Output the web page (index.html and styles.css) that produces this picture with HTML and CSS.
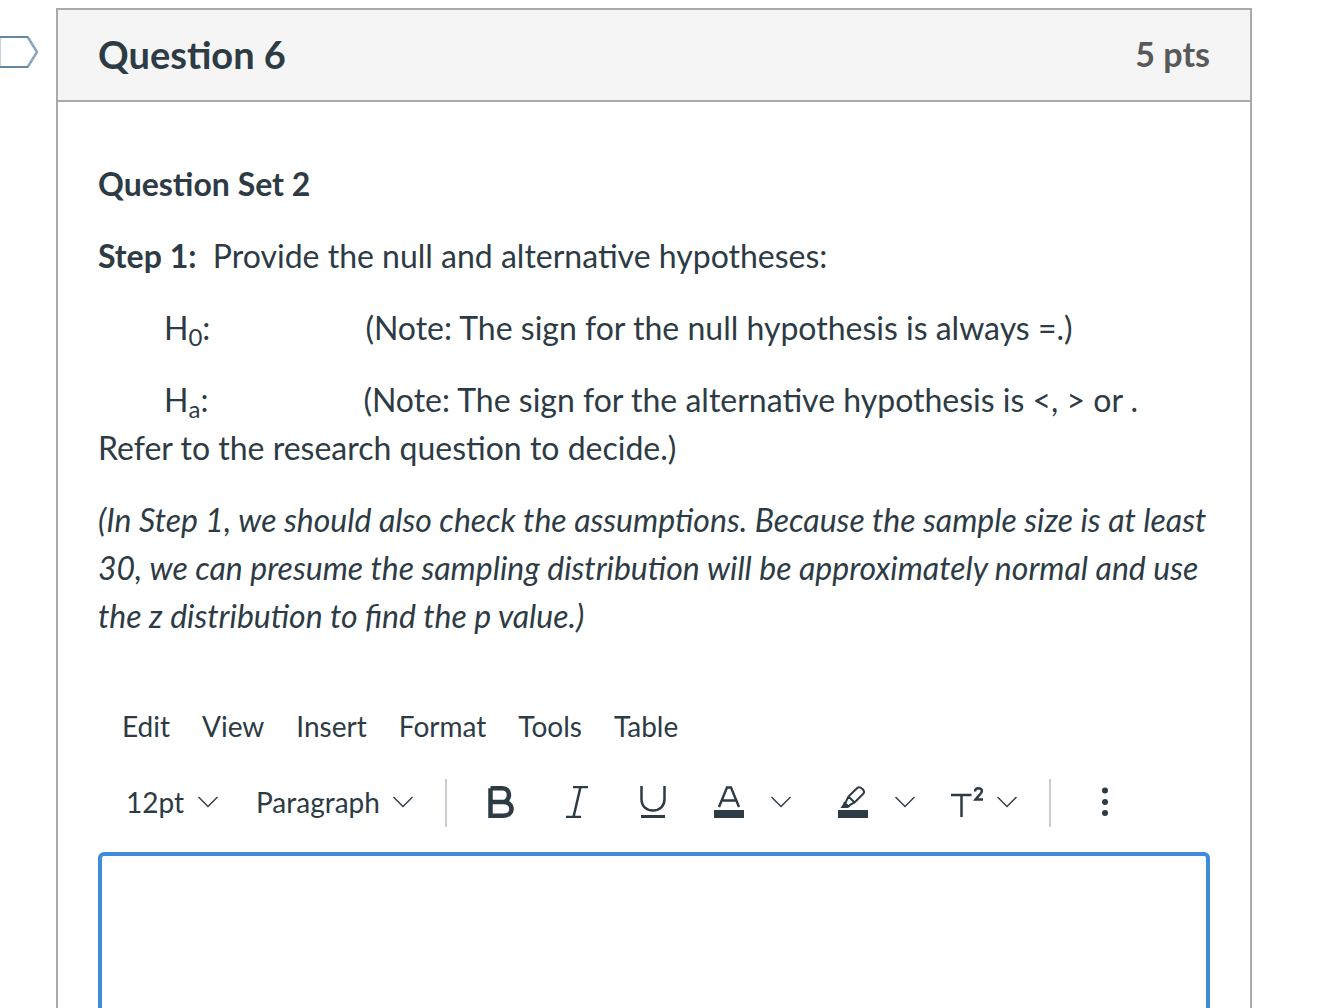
FILE: index.html
```html
<!DOCTYPE html>
<html lang="en">
<head>
    <meta charset="UTF-8">
    <meta name="viewport" content="width=device-width, initial-scale=1.0">
    <title>Question 6</title>
    <link rel="stylesheet" href="styles.css">
</head>
<body>

    <main class="quiz">
        <button type="button" class="flag" aria-label="Flag question">
            <svg width="38" height="32" viewBox="0 0 38 32" fill="none">
                <path d="M0.500 2V30" stroke="#c5d1db"/>
                <path d="M28 1.500L37 16L28 30.500" stroke="#8ba5b9" stroke-width="2.500"/>
                <path d="M0 1H28.500M0 31H28.500" stroke="#6586a0" stroke-width="2"/>
            </svg>
        </button>

        <section class="question">
            <header class="question-header">
                <h1>Question 6</h1>
                <span class="points">5 pts</span>
            </header>

            <div class="question-body">
                <div class="question-text">
                    <p><strong>Question Set 2</strong></p>
                    <p><strong>Step 1:</strong>&nbsp; Provide the null and alternative hypotheses:</p>
                    <p><span class="term">H<sub>0</sub>:</span>(Note: The sign for the null hypothesis is always =.)</p>
                    <p><span class="term">H<sub>a</sub>:</span>(Note: The sign for the alternative hypothesis is &lt;, &gt; or . Refer to the research question to decide.)</p>
                    <p><em>(In Step 1, we should also check the assumptions. Because the sample size is at least 30, we can presume the sampling distribution will be approximately normal and use the z distribution to find the p value.)</em></p>
                </div>

                <div class="menubar">
                    <button type="button">Edit</button>
                    <button type="button">View</button>
                    <button type="button">Insert</button>
                    <button type="button">Format</button>
                    <button type="button">Tools</button>
                    <button type="button">Table</button>
                </div>

                <div class="toolbar">
                    <div class="group group-select">
                        <label class="picker">
                            <select aria-label="Font size">
                                <option>12pt</option>
                                <option>14pt</option>
                                <option>18pt</option>
                            </select>
                            <svg class="chevron" viewBox="0 0 20 12"><path d="M0.500 1L10 10.500L19.500 1"/></svg>
                        </label>
                        <label class="picker">
                            <select aria-label="Block style">
                                <option>Paragraph</option>
                            </select>
                            <svg class="chevron" viewBox="0 0 20 12"><path d="M0.500 1L10 10.500L19.500 1"/></svg>
                        </label>
                    </div>

                    <div class="group group-format">
                        <button type="button" class="tool" aria-label="Bold">
                            <svg class="icon" viewBox="0 0 32 32"><path d="M5.500 2.250H17.500C21.500 2.250 24 5 24 9C24 12.500 21.500 16 18 16H5.500M5.500 16H18C23 16 26.500 18.500 26.500 23C26.500 27 23 29.750 18 29.750H5.500V2.250" stroke-width="4.500"/></svg>
                        </button>
                        <button type="button" class="tool" aria-label="Italic">
                            <svg class="icon" viewBox="0 0 32 32"><path d="M12 1H27M5 31H20M19.500 1L12.500 31" stroke-width="2.500"/></svg>
                        </button>
                        <button type="button" class="tool" aria-label="Underline">
                            <svg class="icon" viewBox="0 0 32 32"><path d="M4.500 0V13C4.500 20 9 24.500 16 24.500C23 24.500 27.500 20 27.500 13V0" stroke-width="2.500"/><path d="M4 30.500H28" stroke-width="3"/></svg>
                        </button>
                        <button type="button" class="tool" aria-label="Text color">
                            <svg class="icon" viewBox="0 0 32 32"><path d="M6 21L14 1.500H18L26 21M9 14.500H23" stroke-width="2.400"/><path d="M1 28H31" stroke-width="8"/></svg>
                        </button>
                        <button type="button" class="more" aria-label="Text color options">
                            <svg class="chevron" viewBox="0 0 20 12"><path d="M0.500 1L10 10.500L19.500 1"/></svg>
                        </button>
                        <button type="button" class="tool" aria-label="Background color">
                            <svg class="icon" viewBox="0 0 32 32"><path d="M11.500 10.500L20.500 1.800Q22.500 0.500 25.500 3Q28 5.500 26.500 7.500L17.500 16.500M11.500 10.500L9.500 14.500Q9.500 16 7.500 17L11.500 20.500C13 18.500 14 18 17.500 16.500M11.500 10.500L17.500 16.500" stroke-width="2" stroke-linejoin="round"/><path class="solid" d="M7.500 16L12.500 20.500L10.500 22H3.500Z"/></svg>
                        </button>
                        <button type="button" class="more" aria-label="Background color options">
                            <svg class="chevron" viewBox="0 0 20 12"><path d="M0.500 1L10 10.500L19.500 1"/></svg>
                        </button>
                        <button type="button" class="script" aria-label="Superscript and subscript">
                            <svg class="icon" viewBox="0 0 32 32"><path d="M0 9H20.500" stroke-width="2.500"/><path d="M10.500 9V31" stroke-width="2.500"/><path d="M24 5.500C24 3.500 25.500 2.200 27.500 2.200C29.500 2.200 31 3.500 31 5C31 7 28 9 24.500 13.500H32" stroke-width="2.400"/></svg>
                            <svg class="chevron" viewBox="0 0 20 12"><path d="M0.500 1L10 10.500L19.500 1"/></svg>
                        </button>
                    </div>

                    <button type="button" class="overflow" aria-label="More">
                        <svg class="icon" viewBox="0 0 32 32"><g class="solid"><circle cx="16" cy="4.500" r="3"/><circle cx="16" cy="16" r="3"/><circle cx="16" cy="27" r="3"/></g></svg>
                    </button>
                </div>

                <textarea class="editor" aria-label="Answer"></textarea>
            </div>
        </section>
    </main>

</body>
</html>
```

FILE: styles.css
```css
body {
    margin: 0;
    font-family: Lato, "Liberation Sans", sans-serif;
    font-size: 32px;
    line-height: 48px;
    color: #2d3b45;
    background-color: #fff;
}
button, select {
    margin: 0;
    padding: 0;
    border: none;
    background: none;
    font: inherit;
    font-size: 28px;
    color: inherit;
    cursor: pointer;
}
.quiz {
    display: flex;
    align-items: flex-start;
    gap: 18px;
    padding: 8px 78px 40px 0;
}
.flag {
    display: flex;
    margin-top: 28px;
}
.question {
    flex: 1;
    min-width: 0;
    border: 2px solid #aaa;
}
.question-header {
    display: flex;
    justify-content: space-between;
    align-items: center;
    padding: 20px 40px 22px;
    border-bottom: 2px solid #aaa;
    background-color: #f5f5f5;
}
.question-header h1 {
    margin: 0;
    font-size: 38px;
    font-weight: bold;
}
.points {
    font-size: 34px;
    font-weight: bold;
    color: #595959;
}
.question-body {
    padding: 34px 40px 40px;
}
.question-text p {
    margin: 24px 0;
}
.question-text sub {
    font-size: 24px;
    line-height: 0;
    position: relative;
    bottom: -6px;
    vertical-align: baseline;
}
.term {
    margin-left: 66px;
    margin-right: 155px;
}
.menubar {
    display: flex;
    gap: 32px;
    padding: 0 24px;
    margin-top: 62px;
}
.toolbar {
    display: flex;
    align-items: center;
    margin: 29px 0 25px;
}
.group {
    box-sizing: border-box;
    display: flex;
    align-items: center;
    height: 48px;
    border-right: 2px solid #c7cdd1;
}
.group-select {
    gap: 38px;
    padding: 0 32px 2px 28px;
}
.group-format {
    padding: 0 32px 2px 16px;
}
.picker {
    display: flex;
    align-items: center;
    gap: 13px;
}
.picker select {
    appearance: none;
}
.tool {
    display: flex;
    justify-content: center;
    width: 76px;
}
.tool[aria-label="Background color"] .icon {
    background: linear-gradient(#2d3b45, #2d3b45) center bottom / 30px 8px no-repeat;
}
.more {
    display: flex;
    width: 48px;
    padding-left: 4px;
}
.script {
    display: flex;
    align-items: center;
    gap: 14px;
    margin-left: 12px;
}
.overflow {
    display: flex;
    padding: 0 38px 2px;
}
.icon {
    width: 32px;
    height: 32px;
    fill: none;
    stroke: #2d3b45;
}
.solid {
    fill: #2d3b45;
    stroke: none;
}
.chevron {
    width: 20px;
    height: 12px;
    fill: none;
    stroke: #2d3b45;
    stroke-width: 1.4;
}
.editor {
    display: block;
    box-sizing: border-box;
    width: 100%;
    height: 400px;
    padding: 20px;
    border: 4px solid #3f8cdd;
    border-radius: 6px;
    outline: none;
    resize: none;
    font: inherit;
    color: inherit;
}
```
